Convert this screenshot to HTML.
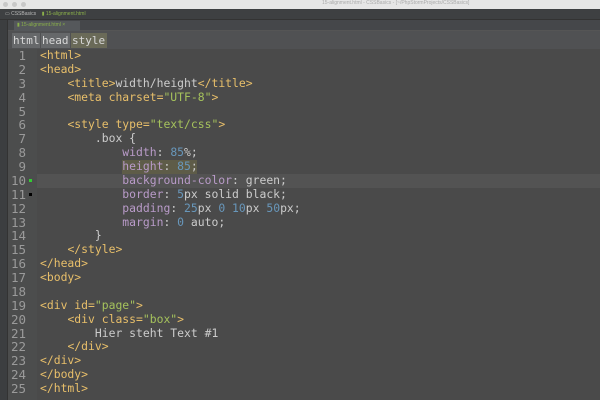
<!DOCTYPE html>
<html><head><meta charset="utf-8"><style>
*{margin:0;padding:0;box-sizing:border-box}
body{width:600px;height:400px;overflow:hidden;background:#4a4a4a;position:relative;font-family:"DejaVu Sans Mono","Liberation Mono",monospace}
.abs{position:absolute}
#title{left:0;top:0;width:600px;height:9px;background:#e6e6e6}
#nav{left:0;top:9px;width:600px;height:11px;background:#3e4042;border-bottom:1px solid #333}
#tabs{left:8px;top:20px;width:592px;height:11px;background:#45474a;border-bottom:1px solid #555}
#crumb{left:8px;top:31px;width:592px;height:18px;background:#505153}
#strip{left:0;top:20px;width:8px;height:380px;background:#3c3e40;border-right:1px solid #333}
#gutter{left:8px;top:49px;width:29px;height:351px;background:#4c4d4d}
#cur{left:37px;top:174px;width:563px;height:14px;background:#535353}
.ln{position:absolute;left:4px;width:22px;text-align:right;color:#9a9a9a;font-size:12.5px;line-height:13.875px}
.cl{position:absolute;left:40px;white-space:pre;font-size:11.4px;line-height:13.875px;color:#c8c8c8}
.t{color:#e8bf6a}.v{color:#a5c25c}.p{color:#b99bc9}.n{color:#6897bb}.w{color:#cccccc}
.bc{position:absolute;top:33px;height:15px;font-size:11px;line-height:15px;color:#d8d8d8;white-space:pre;overflow:hidden;padding-left:1px}
</style></head><body>
<div class="abs" id="title">
<span class="abs" style="left:3px;top:2px;width:5px;height:5px;border-radius:50%;background:#c8c8c8"></span>
<span class="abs" style="left:12px;top:2px;width:5px;height:5px;border-radius:50%;background:#c8c8c8"></span>
<span class="abs" style="left:21px;top:2px;width:5px;height:5px;border-radius:50%;background:#c8c8c8"></span>
<span class="abs" style="left:322px;top:0;font:5px 'Liberation Sans',sans-serif;color:#aaa;white-space:nowrap">15-alignment.html - CSSBasics - [~/PhpStormProjects/CSSBasics]</span>
</div>
<div class="abs" id="nav"><span class="abs" style="left:5px;top:2px;font:5px 'Liberation Sans',sans-serif;color:#bbb;white-space:nowrap">▭ CSSBasics &nbsp;&nbsp; <span style="color:#8ab04a">▮ 15-alignment.html</span></span></div>
<div class="abs" id="strip"></div>
<div class="abs" id="tabs"><span class="abs" style="left:6px;top:1px;width:66px;height:10px;background:#55585b"></span><span class="abs" style="left:9px;top:2px;font:5px 'Liberation Sans',sans-serif;color:#8ab04a;white-space:nowrap">▮ 15-alignment.html ×</span></div>
<div class="abs" id="crumb"></div>
<span class="bc" style="left:12px;width:28px;background:#66686a">html</span>
<span class="bc" style="left:41px;width:29px;background:#66686a">head</span>
<span class="bc" style="left:71px;width:36px;background:#6a6a58">style</span>
<div class="abs" id="gutter"></div>
<div class="abs" id="cur"></div>
<span class="abs" style="left:122px;top:160px;width:75px;height:14px;background:#5e5c48"></span>
<span class="abs" style="left:29px;top:179px;width:3px;height:3px;background:#3c3"></span>
<span class="abs" style="left:29px;top:193px;width:3px;height:3px;background:#000"></span>
<div id="code"></div>
<script>
var L=[
'<span class=t>&lt;html&gt;</span>',
'<span class=t>&lt;head&gt;</span>',
'    <span class=t>&lt;title&gt;</span><span class=w>width/height</span><span class=t>&lt;/title&gt;</span>',
'    <span class=t>&lt;meta charset=</span><span class=v>"UTF-8"</span><span class=t>&gt;</span>',
'',
'    <span class=t>&lt;style type=</span><span class=v>"text/css"</span><span class=t>&gt;</span>',
'        <span class=w>.box {</span>',
'            <span class=p>width</span><span class=w>: </span><span class=n>85</span><span class=w>%;</span>',
'            <span class=p>height</span><span class=w>: </span><span class=n>85</span><span class=w>;</span>',
'            <span class=p>background-color</span><span class=w>: green;</span>',
'            <span class=p>border</span><span class=w>: </span><span class=n>5</span><span class=w>px solid black;</span>',
'            <span class=p>padding</span><span class=w>: </span><span class=n>25</span><span class=w>px </span><span class=n>0 10</span><span class=w>px </span><span class=n>50</span><span class=w>px;</span>',
'            <span class=p>margin</span><span class=w>: </span><span class=n>0</span><span class=w> auto;</span>',
'        <span class=w>}</span>',
'    <span class=t>&lt;/style&gt;</span>',
'<span class=t>&lt;/head&gt;</span>',
'<span class=t>&lt;body&gt;</span>',
'',
'<span class=t>&lt;div id=</span><span class=v>"page"</span><span class=t>&gt;</span>',
'    <span class=t>&lt;div class=</span><span class=v>"box"</span><span class=t>&gt;</span>',
'        <span class=w>Hier steht Text #1</span>',
'    <span class=t>&lt;/div&gt;</span>',
'<span class=t>&lt;/div&gt;</span>',
'<span class=t>&lt;/body&gt;</span>',
'<span class=t>&lt;/html&gt;</span>'];
var h='';for(var i=0;i<L.length;i++){var y=49+i*13.875;h+='<div class=ln style="top:'+y+'px">'+(i+1)+'</div><div class=cl style="top:'+y+'px">'+L[i]+'</div>';}
document.getElementById('code').innerHTML=h;
</script>
</body></html>
